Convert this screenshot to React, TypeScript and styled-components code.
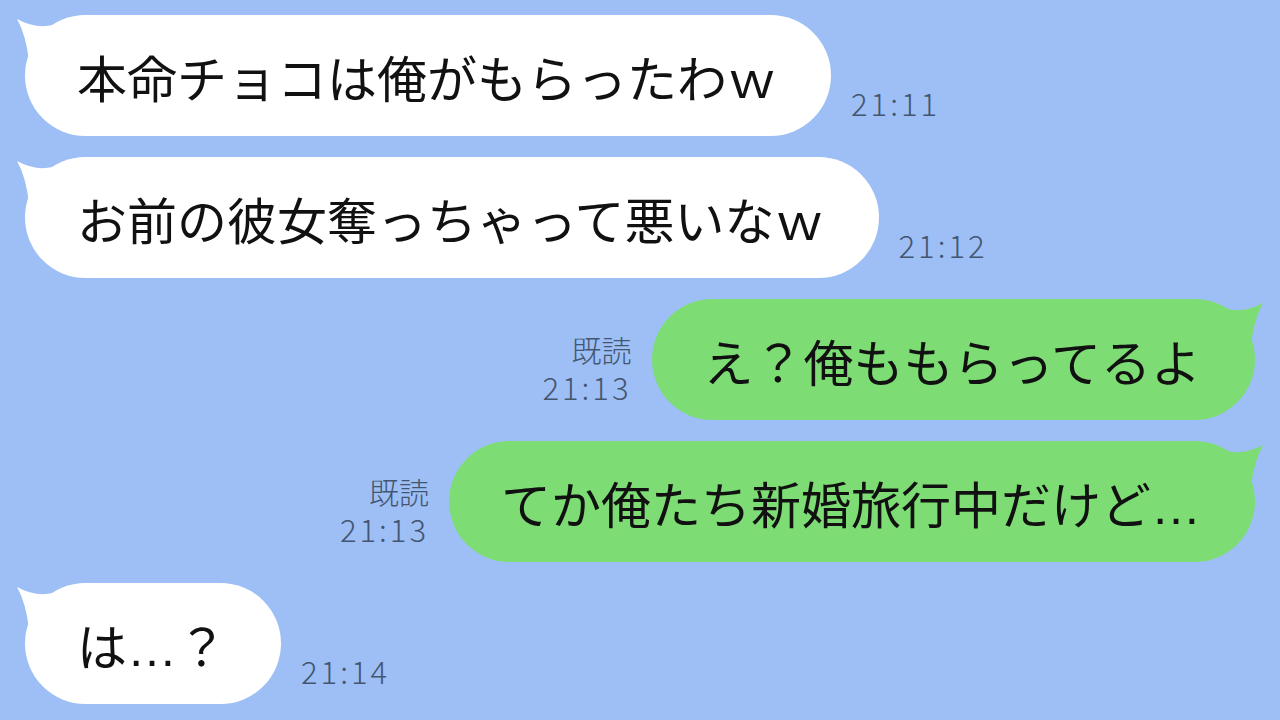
import React from "react"
import styled, { createGlobalStyle } from "styled-components"

const GlobalStyle = createGlobalStyle`
  html, body {
    margin: 0;
    padding: 0;
    background: #9dbff6;
  }
`

const BUBBLE_HEIGHT = 121

interface Message {
  text: string
  time: string
  mine?: boolean
  read?: boolean
}

const messages: Message[] = [
  { text: "本命チョコは俺がもらったわｗ", time: "21:11" },
  { text: "お前の彼女奪っちゃって悪いなｗ", time: "21:12" },
  { text: "え？俺ももらってるよ", time: "21:13", mine: true, read: true },
  { text: "てか俺たち新婚旅行中だけど…", time: "21:13", mine: true, read: true },
  { text: "は…？", time: "21:14" },
]

const Screen = styled.div`
  width: 1280px;
  height: 720px;
  overflow: hidden;
  background: #9dbff6;
  display: flex;
  flex-direction: column;
  gap: 21px;
  padding: 15px 25px;
  box-sizing: border-box;
`

const Row = styled.div<{ $mine?: boolean }>`
  display: flex;
  align-items: flex-end;
  gap: 20px;
  flex-direction: ${p => (p.$mine ? "row-reverse" : "row")};
`

const Bubble = styled.div<{ $mine?: boolean }>`
  position: relative;
  height: ${BUBBLE_HEIGHT}px;
  padding: 0 54px 0 52px;
  border-radius: 61px;
  background: ${p => (p.$mine ? "#7ddd74" : "#ffffff")};
  color: #111;
  display: flex;
  align-items: center;
  font-family: "Liberation Sans", "Noto Sans CJK JP", sans-serif;
  font-size: 50px;
  white-space: nowrap;
`

const Tail = styled.svg<{ $mine?: boolean }>`
  position: absolute;
  top: 0;
  width: 48px;
  height: 48px;
  overflow: visible;
  ${p => (p.$mine ? "right: 0; transform: scaleX(-1);" : "left: 0;")}
`

const Meta = styled.div<{ $mine?: boolean }>`
  display: flex;
  flex-direction: column;
  align-items: ${p => (p.$mine ? "flex-end" : "flex-start")};
  margin-bottom: 14px;
  color: #44566f;
  font-family: "Noto Sans CJK JP", "Noto Sans", sans-serif;
  font-weight: 300;
`

const Read = styled.span`
  font-size: 30px;
  line-height: 38px;
`

const Time = styled.span`
  font-size: 31px;
  line-height: 38px;
  letter-spacing: 3px;
`

const ChatBubble: React.FC<{ msg: Message }> = ({ msg }) => (
  <Bubble $mine={msg.mine}>
    <Tail $mine={msg.mine} viewBox="0 0 48 48">
      <path
        d="M -8 4 Q 10 14 28 10 L 44 30 L 4 46 Q 1 20 -8 4 Z"
        fill={msg.mine ? "#7ddd74" : "#ffffff"}
      />
    </Tail>
    {msg.text}
  </Bubble>
)

const App: React.FC = () => (
  <>
    <GlobalStyle />
    <Screen>
      {messages.map((msg, i) => (
        <Row key={i} $mine={msg.mine}>
          <ChatBubble msg={msg} />
          <Meta $mine={msg.mine}>
            {msg.read && <Read>既読</Read>}
            <Time>{msg.time}</Time>
          </Meta>
        </Row>
      ))}
    </Screen>
  </>
)

export default App
